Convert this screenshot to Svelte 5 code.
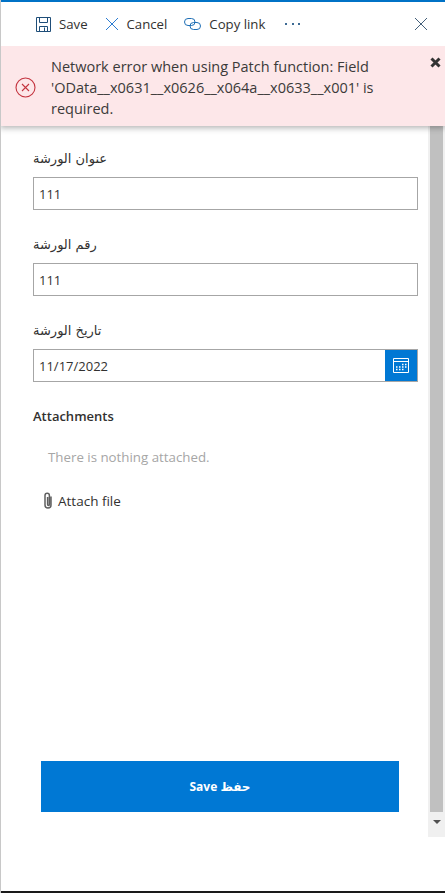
<script>
    let fields = [
        { label: "عنوان الورشة", value: "111" },
        { label: "رقم الورشة", value: "111" }
    ];
    let dateLabel = "تاريخ الورشة";
    let date = "11/17/2022";
</script>

<div class="screen">
    <header class="toolbar">
        <button class="cmd">
            <svg class="save-icon" width="15" height="15" viewBox="0 0 15 15" fill="none" stroke="#1f4e79" stroke-width="1">
                <path d="M.5.500h14v14H.5z" />
                <path d="M3.500.500v5h8v-5M3.500 14.500v-5h8v5M8.500 10.500v4" />
            </svg>
            <span>Save</span>
        </button>
        <button class="cmd">
            <svg width="14" height="14" viewBox="0 0 14 14" fill="none" stroke="#2b7cd3" stroke-width="1">
                <path d="M1 1l12 12M13 1L1 13" />
            </svg>
            <span>Cancel</span>
        </button>
        <button class="cmd">
            <svg width="17" height="12" viewBox="0 0 17 12" fill="none" stroke="#1f6fb5" stroke-width="1">
                <rect x=".5" y=".5" width="10.500" height="7" rx="3.500" />
                <rect x="6" y="4.500" width="10.500" height="7" rx="3.500" />
            </svg>
            <span>Copy link</span>
        </button>
        <div class="more"><i></i><i></i><i></i></div>
        <svg class="close" width="14" height="14" viewBox="0 0 14 14" fill="none" stroke="#44607a" stroke-width="1">
            <path d="M1 1l12 12M13 1L1 13" />
        </svg>
    </header>

    <div class="banner">
        <svg class="err" width="21" height="21" viewBox="0 0 21 21" fill="none" stroke="#c4343f" stroke-width="1.100">
            <circle cx="10.500" cy="10.500" r="9.500" />
            <path d="M7 7l7 7M14 7l-7 7" />
        </svg>
        <p>Network error when using Patch function: Field 'OData__x0631__x0626__x064a__x0633__x001' is required.</p>
        <svg class="dismiss" width="11" height="11" viewBox="0 0 11 11" fill="none" stroke="#333" stroke-width="3">
            <path d="M1.500 1.500l8 8M9.500 1.500l-8 8" />
        </svg>
    </div>

    <div class="body">
        <main class="form">
            {#each fields as f}
                <div class="field">
                    <div class="label">{f.label}</div>
                    <div class="box"><span>{f.value}</span></div>
                </div>
            {/each}
            <div class="field">
                <div class="label">{dateLabel}</div>
                <div class="box">
                    <span>{date}</span>
                    <div class="cal">
                        <svg width="16" height="15" viewBox="0 0 16 15" fill="none" stroke="#fff">
                            <path d="M.5.500h15v14H.5zM.5 3.500h15" />
                            <path d="M9 6.500h1.500M12 6.500h1.500M3 9h1.500M6 9h1.500M9 9h1.500M12 9h1.500M3 11.500h1.500M6 11.500h1.500M9 11.500h1.500" stroke-width="1.400" />
                        </svg>
                    </div>
                </div>
            </div>

            <div class="attach-title">Attachments</div>
            <div class="empty">There is nothing attached.</div>
            <div class="attach">
                <svg width="10" height="18" viewBox="0 0 10 18" fill="none" stroke="#5f5f5f" stroke-width="1.500">
                    <path d="M8 4.500V13a3 3 0 0 1-6 0V3.500a2.200 2.200 0 0 1 4.400 0V12.500a.9.900 0 0 1-1.800 0V5" />
                </svg>
                <span>Attach file</span>
            </div>

            <button class="submit">Save حفظ</button>
        </main>

        <div class="scrollbar">
            <div class="thumb"></div>
            <div class="arrow"></div>
        </div>
    </div>

    <div class="base"></div>
</div>

<style>
    :global(body) {
        margin: 0;
        background: #fff;
    }

    .screen {
        height: 893px;
        width: 445px;
        display: flex;
        flex-direction: column;
        overflow: hidden;
        font-family: "Open Sans", "DejaVu Sans", sans-serif;
        color: #323130;
        border-left: 1px solid #c8c8c8;
        box-sizing: border-box;
    }

    .toolbar {
        height: 44px;
        border-top: 2px solid #0072c6;
        margin-left: -1px;
        display: flex;
        align-items: center;
        padding-left: 36px;
        flex: none;
        background: #fff;
        position: relative;
        z-index: 2;
    }

    .cmd {
        display: flex;
        align-items: center;
        gap: 8px;
        background: none;
        border: 0;
        padding: 0;
        margin-right: 17px;
        font: inherit;
        font-size: 13.200px;
        color: #323130;
    }

    .more {
        display: flex;
        gap: 4.500px;
        margin-left: 3px;
        margin-top: -1px;
    }

    .more i {
        width: 2px;
        height: 2px;
        background: #3c6a94;
    }

    .close {
        margin-left: auto;
        margin-right: 17px;
    }

    .banner {
        height: 80px;
        box-sizing: border-box;
        padding: 2px 10px 0 15px;
        flex: none;
        background: #fde7e9;
        box-shadow: 0 2px 6px rgba(0, 0, 0, 0.3);
        display: flex;
        align-items: center;
        position: relative;
        z-index: 1;
        margin-left: -1px;
    }

    .err {
        flex: none;
    }

    .banner p {
        margin: 0 0 0 15px;
        font-size: 14.500px;
        line-height: 21px;
        color: #3b3a39;
        width: 345px;
    }

    .dismiss {
        position: absolute;
        top: 11px;
        right: 4px;
    }

    .body {
        flex: 1;
        display: flex;
        min-height: 0;
    }

    .form {
        flex: 1;
        padding: 0 10px 0 32px;
        display: flex;
        flex-direction: column;
    }

    .field {
        height: 86px;
    }

    .field:first-child {
        margin-top: 22px;
    }

    .label {
        font-family: "DejaVu Sans", sans-serif;
        font-size: 13px;
        height: 29px;
        line-height: 22px;
        direction: rtl;
        text-align: right;
        width: fit-content;
    }

    .box {
        height: 33px;
        border: 1px solid #a6a6a6;
        box-sizing: border-box;
        display: flex;
        align-items: center;
        justify-content: space-between;
        padding-left: 5px;
        font-size: 13px;
    }

    .cal {
        width: 32px;
        height: 31px;
        background: #0078d4;
        display: flex;
        align-items: center;
        justify-content: center;
    }

    .attach-title {
        font-size: 13px;
        font-weight: 600;
        line-height: 20px;
    }

    .empty {
        font-size: 13.300px;
        color: #a6a6a6;
        margin: 21px 0 0 15px;
        line-height: 20px;
    }

    .attach {
        display: flex;
        align-items: center;
        gap: 5px;
        margin: 25px 0 0 10px;
        font-size: 13.500px;
    }

    .submit {
        margin: auto 0 79px 8px;
        width: 358px;
        height: 51px;
        flex: none;
        background: #0078d4;
        border: 0;
        color: #fff;
        font-family: "Open Sans", "DejaVu Sans", sans-serif;
        font-weight: 700;
        font-size: 12px;
    }

    .scrollbar {
        width: 17px;
        height: 711px;
        flex: none;
        background: #f0f0f0;
        display: flex;
        flex-direction: column;
        align-items: center;
    }

    .thumb {
        width: 13px;
        align-self: flex-start;
        margin-left: 2px;
        height: 686px;
        background: #c0c0c0;
    }

    .arrow {
        margin-top: 8px;
        width: 0;
        height: 0;
        border-left: 4px solid transparent;
        border-right: 4px solid transparent;
        border-top: 4px solid #505050;
    }

    .base {
        height: 2px;
        flex: none;
        background: #1a1a1a;
        margin-left: -1px;
    }
</style>
